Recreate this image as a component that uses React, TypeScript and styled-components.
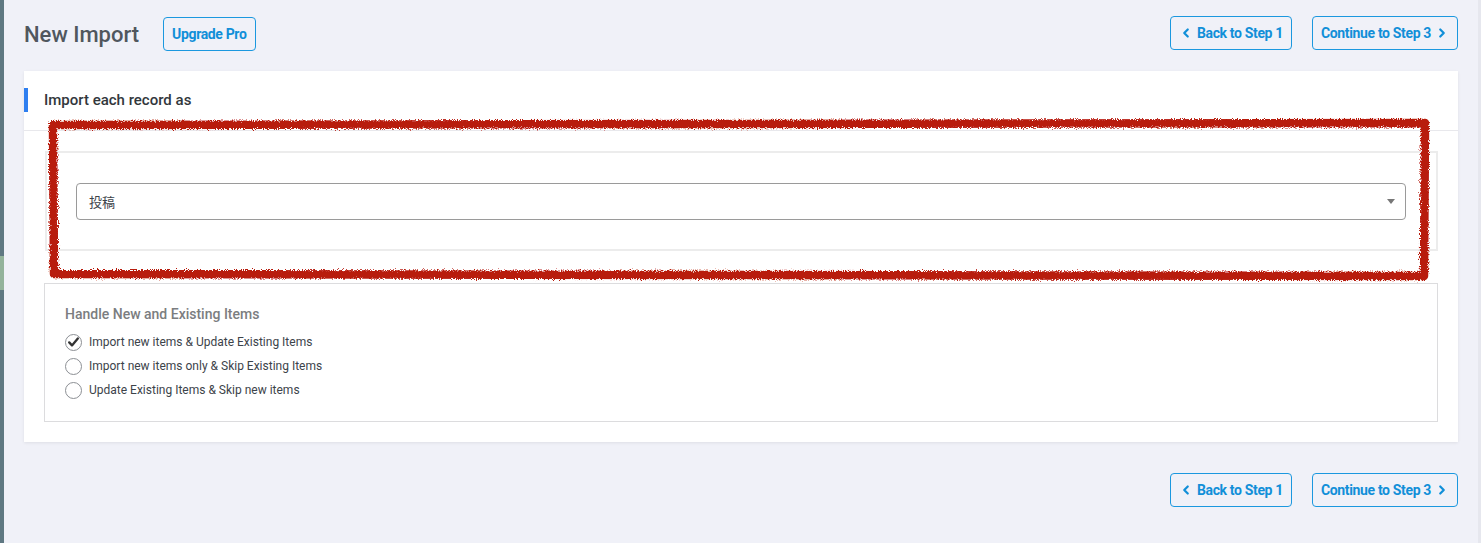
import styled, { createGlobalStyle } from "styled-components";
import { ChevronLeft, ChevronRight } from "lucide-react";

const GlobalStyle = createGlobalStyle`
  html, body {
    margin: 0;
    padding: 0;
    background: #f0f1f8;
    font-family: Roboto, "Noto Sans CJK JP", sans-serif;
  }
`;

const options = [
  "Import new items & Update Existing Items",
  "Import new items only & Skip Existing Items",
  "Update Existing Items & Skip new items",
];

const NavButtons = () => (
  <ButtonGroup>
    <OutlineButton>
      <ChevronLeft size={14} strokeWidth={3.8} />
      Back to Step 1
    </OutlineButton>
    <OutlineButton>
      Continue to Step 3
      <ChevronRight size={14} strokeWidth={3.8} />
    </OutlineButton>
  </ButtonGroup>
);

const Radio = ({ checked }: { checked?: boolean }) => (
  <RadioCircle>
    {checked && (
      <svg width="11" height="10" viewBox="0 0 11 10">
        <path
          d="M1.2 5.4 L4 8.4 L9.8 1.4"
          fill="none"
          stroke="#333"
          strokeWidth="2.3"
          strokeLinecap="round"
          strokeLinejoin="round"
        />
      </svg>
    )}
  </RadioCircle>
);

const RoughMark = () => (
  <MarkLayer>
    <svg width="1382" height="166" viewBox="0 0 1382 166">
      <defs>
        <filter id="rough" x="-2%" y="-6%" width="104%" height="112%">
          <feTurbulence type="fractalNoise" baseFrequency="0.95" numOctaves="2" result="n" />
          <feDisplacementMap in="SourceGraphic" in2="n" scale="6" />
        </filter>
      </defs>
      <path
        d="M5 7 L1377 5 L1376 158 L6 156 Z"
        fill="none"
        stroke="#b81b11"
        strokeWidth="8.5"
        strokeLinejoin="round"
        filter="url(#rough)"
      />
    </svg>
  </MarkLayer>
);

const App = () => {
  return (
    <>
      <GlobalStyle />
      <Shell>
        <SideStrip>
          <StripMark />
        </SideStrip>
        <Main>
          <TopBar>
            <TitleGroup>
              <Title>New Import</Title>
              <OutlineButton>Upgrade Pro</OutlineButton>
            </TitleGroup>
            <NavButtons />
          </TopBar>

          <Card>
            <CardHeader>
              <AccentBar />
              <CardTitle>Import each record as</CardTitle>
            </CardHeader>
            <CardBody>
              <SelectBox>
                <Select>
                  <span>投稿</span>
                  <Caret />
                </Select>
              </SelectBox>
              <OptionsBox>
                <OptionsTitle>Handle New and Existing Items</OptionsTitle>
                <OptionList>
                  {options.map((o, i) => (
                    <OptionRow key={o}>
                      <Radio checked={i === 0} />
                      <span>{o}</span>
                    </OptionRow>
                  ))}
                </OptionList>
              </OptionsBox>
            </CardBody>
            <RoughMark />
          </Card>

          <BottomBar>
            <NavButtons />
          </BottomBar>
        </Main>
      </Shell>
    </>
  );
};

const Shell = styled.div`
  display: flex;
  min-height: 543px;
  border-right: 3px solid #e6e7ee;
`;

const SideStrip = styled.div`
  width: 4px;
  flex-shrink: 0;
  background: #5f7882;
  padding-top: 256px;
`;

const StripMark = styled.div`
  height: 34px;
  background: #93b39b;
`;

const Main = styled.div`
  flex: 1;
  padding: 16px 20px 0 20px;
`;

const TopBar = styled.div`
  display: flex;
  justify-content: space-between;
  align-items: center;
  height: 34px;
`;

const TitleGroup = styled.div`
  display: flex;
  align-items: center;
  gap: 24px;
  padding-top: 2px;
`;

const Title = styled.h1`
  margin: 0;
  font-size: 22px;
  font-weight: 500;
  color: #50575e;
`;

const ButtonGroup = styled.div`
  display: flex;
  gap: 20px;
`;

const OutlineButton = styled.button`
  display: inline-flex;
  align-items: center;
  gap: 4px;
  height: 34px;
  padding: 0 8px;
  border: 1px solid #1b98df;
  border-radius: 4px;
  background: transparent;
  color: #118fd8;
  font-family: Roboto, sans-serif;
  font-size: 14px;
  font-weight: 700;
  letter-spacing: -0.35px;
  cursor: pointer;
`;

const Card = styled.div`
  position: relative;
  margin-top: 21px;
  background: #fff;
  box-shadow: 0 1px 3px rgba(0, 0, 0, 0.08);
`;

const CardHeader = styled.div`
  display: flex;
  align-items: center;
  gap: 16px;
  padding: 17px 0 18px;
  border-bottom: 1px solid #e8e8ec;
`;

const AccentBar = styled.div`
  width: 4px;
  height: 24px;
  background: #2f7ff0;
`;

const CardTitle = styled.div`
  font-size: 15px;
  font-weight: 500;
  color: #32373c;
`;

const CardBody = styled.div`
  display: flex;
  flex-direction: column;
  gap: 32px;
  padding: 20px;
`;

const SelectBox = styled.div`
  border: 2px solid #ececec;
  margin-left: 1px;
  padding: 30px 30px 29px 29px;
`;

const Select = styled.div`
  display: flex;
  align-items: center;
  justify-content: space-between;
  height: 35px;
  padding: 0 10px 0 12px;
  border: 1px solid #9a9a9a;
  border-radius: 4px;
  font-family: "Noto Sans CJK JP", Roboto, sans-serif;
  font-size: 13px;
  color: #3c434a;
`;

const Caret = styled.span`
  width: 0;
  height: 0;
  border-left: 4px solid transparent;
  border-right: 4px solid transparent;
  border-top: 5px solid #777;
`;

const OptionsBox = styled.div`
  border: 1px solid #dcdcde;
  padding: 22px 20px 22px 20px;
`;

const OptionsTitle = styled.div`
  font-size: 14px;
  font-weight: 500;
  color: #7b7d80;
  margin-bottom: 11px;
`;

const OptionList = styled.div`
  display: flex;
  flex-direction: column;
  gap: 6px;
`;

const OptionRow = styled.label`
  display: flex;
  align-items: center;
  gap: 7px;
  height: 18px;
  font-size: 12px;
  color: #3c434a;
`;

const RadioCircle = styled.span`
  display: inline-flex;
  align-items: center;
  justify-content: center;
  box-sizing: border-box;
  width: 17px;
  height: 17px;
  border: 1.5px solid #8c8f94;
  border-radius: 50%;
  background: #fff;
`;

const MarkLayer = styled.div`
  position: absolute;
  left: 24px;
  top: 47px;
  width: 1382px;
  height: 166px;
  pointer-events: none;
`;

const BottomBar = styled.div`
  display: flex;
  justify-content: flex-end;
  margin-top: 31px;
`;

export default App;
